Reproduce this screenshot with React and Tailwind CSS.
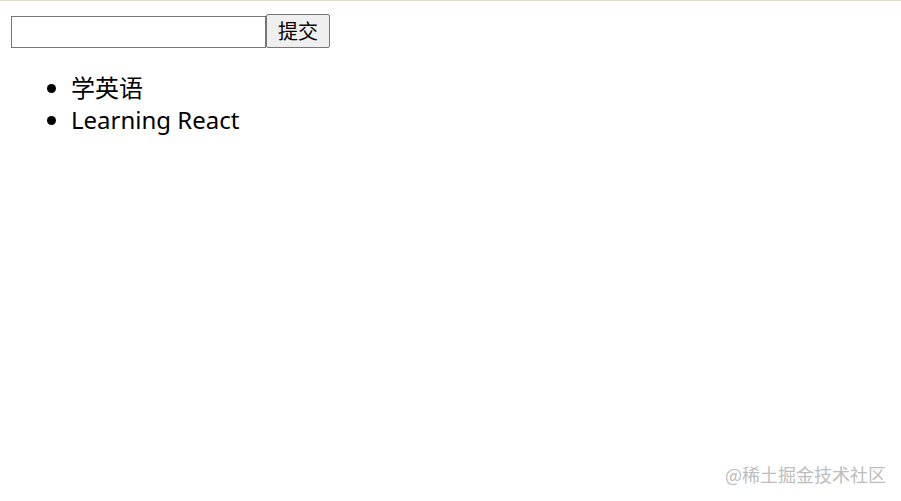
export default function App() {
  const items = ["学英语", "Learning React"];
  return (
    <div className="relative w-[901px] h-[501px] bg-white overflow-hidden font-['Noto_Sans','Noto_Sans_CJK_SC',sans-serif] text-black">
      <div className="h-px bg-[#e2dbc6]" />
      <div className="flex items-end ml-[11px] mt-[13px]">
        <input
          type="text"
          className="w-[255px] h-[32px] border border-[#767676] bg-white outline-none box-border"
        />
        <button className="h-[34px] w-[64px] border border-[#767676] rounded-[2px] bg-[#efefef] text-[20px] leading-[26px] font-['Noto_Sans_CJK_SC',sans-serif] flex items-center justify-center">
          提交
        </button>
      </div>
      <ul className="mt-[24px] ml-[31px] pl-[40px] list-disc text-[24px] leading-[32px]">
        {items.map((t) => (
          <li key={t}>{t}</li>
        ))}
      </ul>
      <div className="absolute right-[15px] bottom-[15px] text-[18px] leading-[24px] text-[#bdbdbd] font-['Noto_Sans_CJK_SC',sans-serif] [text-shadow:0_0_1px_#ffffff]">
        @稀土掘金技术社区
      </div>
    </div>
  );
}
